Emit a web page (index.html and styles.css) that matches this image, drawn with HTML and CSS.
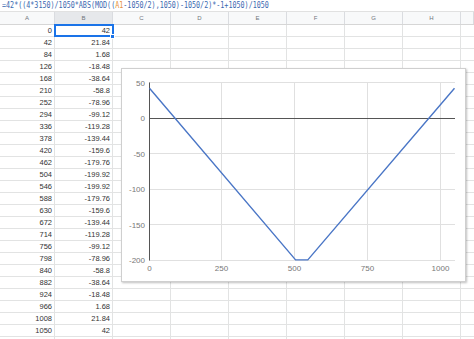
FILE: index.html
```html
<!DOCTYPE html>
<html>
    <head>
        <meta charset="utf-8">
        <title>Sheet</title>
        <link rel="stylesheet" href="styles.css">
    </head>
<body>
    <div class="formula"><span class="expr">=42*((4*3150)/1050*ABS(MOD((<span class="ref">A1</span>-1050/2),1050)-1050/2)*-1+1050)/1050</span></div>
    <div class="sheet">
        <div class="head">
            <div>A</div><div class="on">B</div><div>C</div><div>D</div><div>E</div><div>F</div><div>G</div><div>H</div><div></div>
        </div>
        <div class="row"><div class="cell">0</div><div class="cell sel">42</div><div class="rest"></div></div>
        <div class="row"><div class="cell">42</div><div class="cell">21.84</div><div class="rest"></div></div>
        <div class="row"><div class="cell">84</div><div class="cell">1.68</div><div class="rest"></div></div>
        <div class="row"><div class="cell">126</div><div class="cell">-18.48</div><div class="rest"></div></div>
        <div class="row"><div class="cell">168</div><div class="cell">-38.64</div><div class="rest"></div></div>
        <div class="row"><div class="cell">210</div><div class="cell">-58.8</div><div class="rest"></div></div>
        <div class="row"><div class="cell">252</div><div class="cell">-78.96</div><div class="rest"></div></div>
        <div class="row"><div class="cell">294</div><div class="cell">-99.12</div><div class="rest"></div></div>
        <div class="row"><div class="cell">336</div><div class="cell">-119.28</div><div class="rest"></div></div>
        <div class="row"><div class="cell">378</div><div class="cell">-139.44</div><div class="rest"></div></div>
        <div class="row"><div class="cell">420</div><div class="cell">-159.6</div><div class="rest"></div></div>
        <div class="row"><div class="cell">462</div><div class="cell">-179.76</div><div class="rest"></div></div>
        <div class="row"><div class="cell">504</div><div class="cell">-199.92</div><div class="rest"></div></div>
        <div class="row"><div class="cell">546</div><div class="cell">-199.92</div><div class="rest"></div></div>
        <div class="row"><div class="cell">588</div><div class="cell">-179.76</div><div class="rest"></div></div>
        <div class="row"><div class="cell">630</div><div class="cell">-159.6</div><div class="rest"></div></div>
        <div class="row"><div class="cell">672</div><div class="cell">-139.44</div><div class="rest"></div></div>
        <div class="row"><div class="cell">714</div><div class="cell">-119.28</div><div class="rest"></div></div>
        <div class="row"><div class="cell">756</div><div class="cell">-99.12</div><div class="rest"></div></div>
        <div class="row"><div class="cell">798</div><div class="cell">-78.96</div><div class="rest"></div></div>
        <div class="row"><div class="cell">840</div><div class="cell">-58.8</div><div class="rest"></div></div>
        <div class="row"><div class="cell">882</div><div class="cell">-38.64</div><div class="rest"></div></div>
        <div class="row"><div class="cell">924</div><div class="cell">-18.48</div><div class="rest"></div></div>
        <div class="row"><div class="cell">966</div><div class="cell">1.68</div><div class="rest"></div></div>
        <div class="row"><div class="cell">1008</div><div class="cell">21.84</div><div class="rest"></div></div>
        <div class="row"><div class="cell">1050</div><div class="cell">42</div><div class="rest"></div></div>
        <div class="row"><div class="cell"></div><div class="cell"></div><div class="rest"></div></div>

        <!-- chart floats over the cells -->
        <div class="chart">
            <svg width="343" height="212" viewBox="0 0 343 212">
                <g class="grid">
                    <line x1="99.5" y1="13.5" x2="99.5" y2="191.5" />
                    <line x1="172.5" y1="13.5" x2="172.5" y2="191.5" />
                    <line x1="245.5" y1="13.5" x2="245.5" y2="191.5" />
                    <line x1="318.5" y1="13.5" x2="318.5" y2="191.5" />
                    <line x1="27" y1="13.5" x2="333" y2="13.5" />
                    <line x1="27" y1="84.5" x2="333" y2="84.5" />
                    <line x1="27" y1="120.5" x2="333" y2="120.5" />
                    <line x1="27" y1="155.5" x2="333" y2="155.5" />
                    <line x1="27" y1="191.5" x2="333" y2="191.5" />
                </g>
                <g class="axis">
                    <line x1="27.5" y1="13.5" x2="27.5" y2="191.5" />
                    <line x1="27" y1="49.5" x2="333" y2="49.5" />
                </g>
                <g class="ylab">
                    <text x="23" y="16.5">50</text>
                    <text x="23" y="52">0</text>
                    <text x="23" y="87.5">-50</text>
                    <text x="23" y="123">-100</text>
                    <text x="23" y="158.5">-150</text>
                    <text x="23" y="194">-200</text>
                </g>
                <g class="xlab">
                    <text x="27.5" y="201.5">0</text>
                    <text x="99.5" y="201.5">250</text>
                    <text x="172.5" y="201.5">500</text>
                    <text x="245.5" y="201.5">750</text>
                    <text x="318.5" y="201.5">1000</text>
                </g>
                <polyline class="series" points="27.5,19.2 173.6,190.9 185.8,190.9 332.5,19.2" />
            </svg>
        </div>
    </div>
</body>
</html>
```

FILE: styles.css
```css
body {
    margin: 0;
    background: #fff;
    font-family: "Liberation Sans", Arial, sans-serif;
    overflow: hidden;
}
.formula {
    box-sizing: border-box;
    height: 12px;
    padding-left: 2px;
    border-bottom: 1px solid #e1e1e1;
    white-space: nowrap;
}
.formula .expr {
    display: block;
    font-family: "DejaVu Sans Mono", monospace;
    font-size: 8.5px;
    line-height: 11px;
    color: #3a69b0;
    transform: scaleX(0.79);
    transform-origin: left center;
}
.formula .ref {
    color: #e69138;
}
.sheet {
    position: relative;
}
.head {
    display: grid;
    grid-template-columns: 55px repeat(7, 58px) 1fr;
    height: 13px;
    background: #f8f9fa;
    border-bottom: 1px solid #d6d6d6;
    box-sizing: border-box;
}
.head div {
    border-right: 1px solid #dadce0;
    font-size: 6px;
    line-height: 12px;
    color: #70757a;
    text-align: center;
}
.head .on {
    background: #e6e8eb;
}
.row {
    display: grid;
    grid-template-columns: 55px 58px 1fr;
    height: 12px;
    box-sizing: border-box;
    border-bottom: 1px solid #e2e3e3;
}
.cell {
    border-right: 1px solid #e2e3e3;
    padding-right: 2px;
    font-size: 7.5px;
    line-height: 11px;
    color: #333;
    text-align: right;
}
.rest {
    background: repeating-linear-gradient(to right, transparent 0 57px, #e2e3e3 57px 58px);
}
.sel {
    position: relative;
    outline: 2px solid #1a73e8;
    outline-offset: -1px;
    z-index: 1;
}
.sel::after {
    content: "";
    position: absolute;
    right: -3px;
    bottom: -3px;
    width: 3px;
    height: 3px;
    background: #1a73e8;
    border: 1px solid #fff;
}
.chart {
    position: absolute;
    left: 121px;
    top: 56px;
    width: 345px;
    height: 214px;
    box-sizing: border-box;
    border: 1px solid #cfcfcf;
    background: #fff;
    box-shadow: 1px 1px 2px rgba(0, 0, 0, 0.25);
    z-index: 2;
}
.chart svg {
    display: block;
}
.grid line {
    stroke: #e0e0e0;
    stroke-width: 1;
}
.axis line {
    stroke: #555;
    stroke-width: 1;
}
.ylab text,
.xlab text {
    font-family: "Liberation Sans", Arial, sans-serif;
    font-size: 8px;
    fill: #777;
}
.ylab text {
    text-anchor: end;
}
.xlab text {
    text-anchor: middle;
}
.series {
    fill: none;
    stroke: #4a76c6;
    stroke-width: 1.4;
}
```
